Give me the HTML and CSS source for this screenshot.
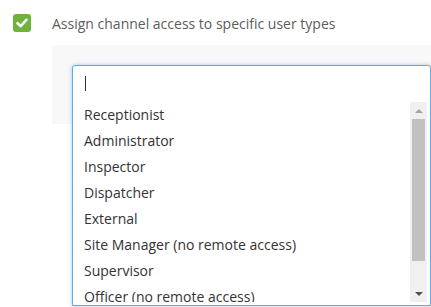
FILE: index.html
```html
<!DOCTYPE html>
<html>
<head>
<meta charset="utf-8">
<link rel="stylesheet" href="styles.css">
</head>
<body>
<div class="field">
  <div class="check-row">
    <span class="checkbox">
      <svg width="18" height="18" viewBox="0 0 18 18"><path d="M4.6 9.2 L7.6 12.1 L13.4 5.8" fill="none" stroke="#fff" stroke-width="2.6" stroke-linecap="round" stroke-linejoin="round"/></svg>
    </span>
    <span class="label">Assign channel access to specific user types</span>
  </div>
  <div class="panel">
    <div class="dropdown">
      <div class="search"><span class="caret"></span></div>
      <div class="list-wrap">
        <ul class="list">
          <li>Receptionist</li>
          <li>Administrator</li>
          <li>Inspector</li>
          <li>Dispatcher</li>
          <li>External</li>
          <li>Site Manager (no remote access)</li>
          <li>Supervisor</li>
          <li>Officer (no remote access)</li>
        </ul>
        <div class="scrollbar">
          <div class="arrow up"></div>
          <div class="thumb"></div>
          <div class="arrow down"></div>
        </div>
      </div>
    </div>
  </div>
</div>
</body>
</html>
```
FILE: styles.css
```css
html, body {
  margin: 0;
  padding: 0;
  background: #fff;
  font-family: "Open Sans", "Liberation Sans", sans-serif;
  font-size: 14px;
  overflow: hidden;
}
.field {
  width: 431px;
  height: 307px;
  position: relative;
}
.check-row {
  display: flex;
  align-items: center;
  padding: 14px 0 0 13px;
  height: 18px;
}
.checkbox {
  width: 18px;
  height: 18px;
  background: #6fb33c;
  border-radius: 3px;
  display: block;
}
.checkbox svg { display: block; }
.label {
  margin-left: 21px;
  color: #5c5c5c;
  line-height: 18px;
  position: relative;
  top: 1px;
}
.panel {
  margin: 13px 0 0 52px;
  height: 79px;
  background: #f8f8f8;
  position: relative;
}
.dropdown {
  position: absolute;
  left: 20px;
  top: 20px;
  width: 357px;
  height: 239px;
  border: 1px solid #5eaae6;
  border-radius: 3px 3px 0 0;
  background: #fff;
  box-shadow: 0 0 4px rgba(102, 175, 233, 0.6);
  display: flex;
  flex-direction: column;
}
.search {
  height: 32px;
  display: flex;
  align-items: center;
  padding-left: 12px;
}
.caret {
  width: 1px;
  height: 15px;
  background: #333;
  margin-top: 2px;
}
.list-wrap {
  display: flex;
  flex: 1;
  padding: 4px 3px 3px 0;
  min-height: 0;
}
.list {
  list-style: none;
  margin: 0;
  padding: 0 0 0 11px;
  flex: 1;
  overflow: hidden;
}
.list li {
  height: 26px;
  line-height: 26px;
  color: #333;
  white-space: nowrap;
}
.scrollbar {
  width: 17px;
  background: #f0f0f0;
  display: flex;
  flex-direction: column;
  align-items: center;
}
.arrow {
  width: 0;
  height: 0;
  border-left: 4px solid transparent;
  border-right: 4px solid transparent;
}
.arrow.up {
  border-bottom: 4px solid #a3a3a3;
  margin: 7px 0 6px;
}
.arrow.down {
  border-top: 4px solid #505050;
  margin: auto 0 6px;
}
.thumb {
  width: 13px;
  height: 142px;
  background: #c1c1c1;
}
```
